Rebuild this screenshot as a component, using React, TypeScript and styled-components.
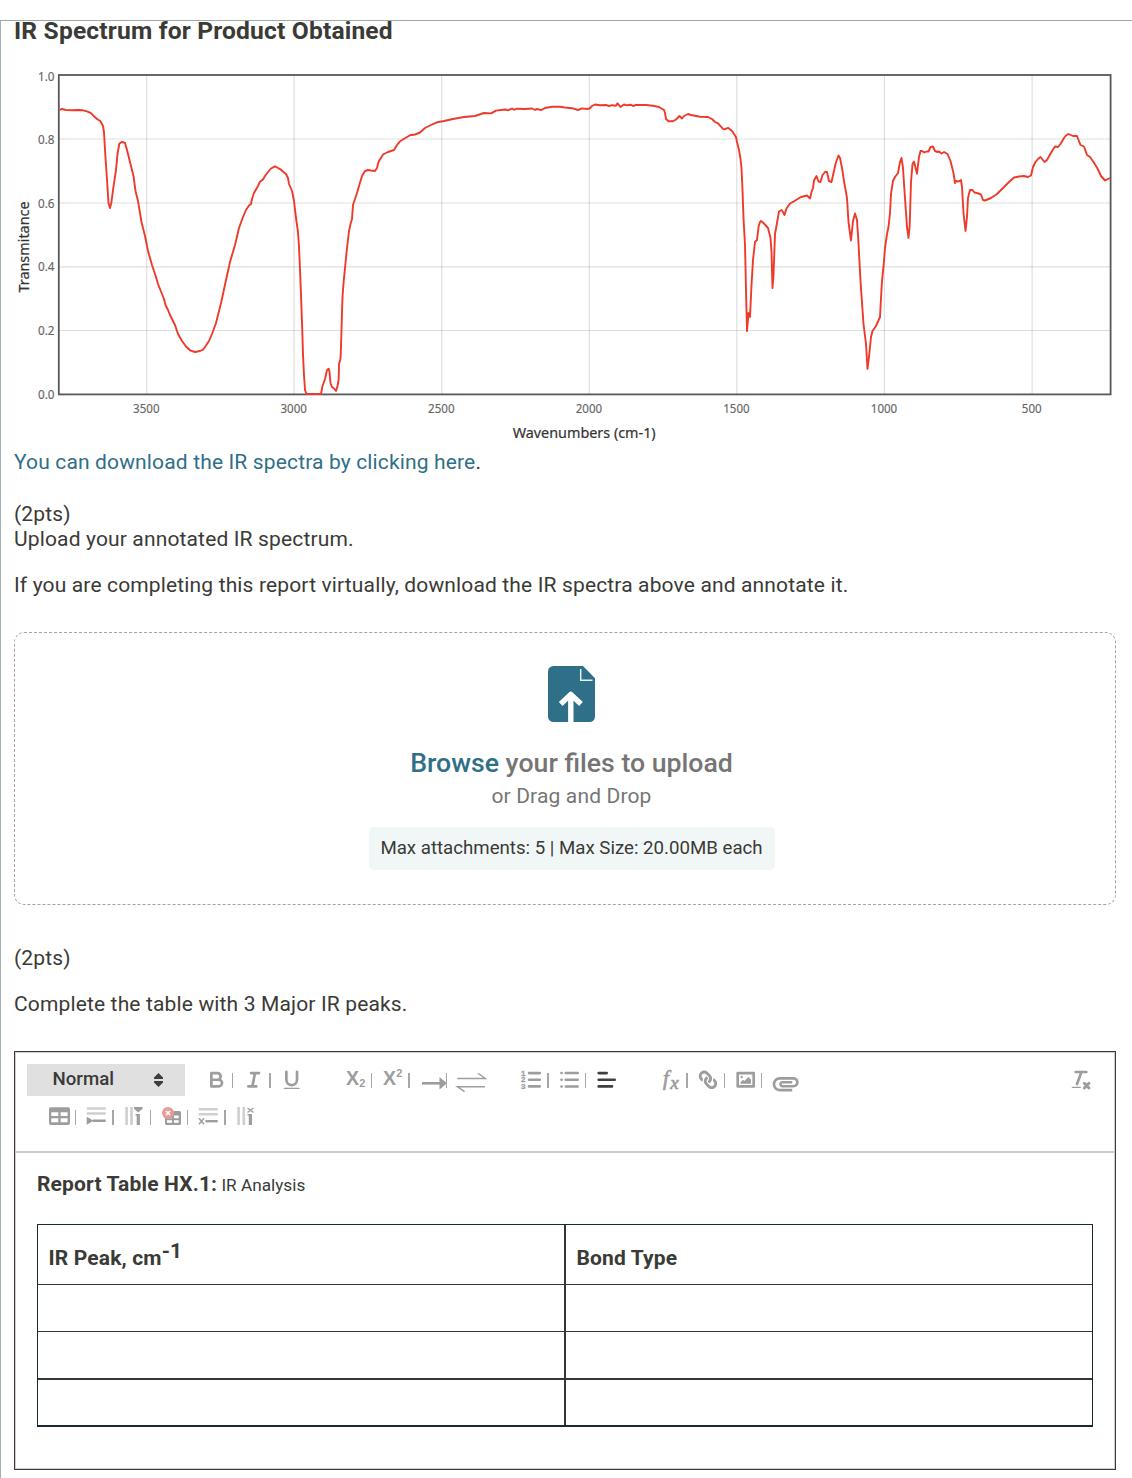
import React from "react";
import styled, { createGlobalStyle } from "styled-components";
import { FaLink } from "react-icons/fa";

const GlobalStyle = createGlobalStyle`
  * { box-sizing: border-box; }
  body {
    margin: 0;
    background: #fff;
    color: #3a3a36;
    font-family: Roboto, "Liberation Sans", sans-serif;
  }
`;

const Page = styled.div`
  height: 1478px;
  padding-top: 20px;
  overflow: hidden;
`;

const Section = styled.main`
  height: 1458px;
  padding: 0 16px 0 13px;
  border-top: 1px solid #a0a8a4;
  border-left: 1px solid #a5b3b6;
`;

const Title = styled.h2`
  margin: 0;
  height: 39px;
  font-size: 24.6px;
  letter-spacing: 0.17px;
  line-height: 20px;
  font-weight: 700;
  white-space: nowrap;
`;

const Chart = styled.svg`
  display: block;
  width: 1104px;
  height: 390px;
  font-family: "Noto Sans", sans-serif;
`;

const Line = styled.p<{ $gap?: number }>`
  margin: ${(p) => p.$gap ?? 0}px 0 0;
  font-size: 21px;
  letter-spacing: 0.145px;
  line-height: 25px;
  white-space: nowrap;
`;

const Link = styled.a`
  color: #2f6f88;
`;

const DropZone = styled.section`
  display: flex;
  flex-direction: column;
  align-items: center;
  width: 1102px;
  height: 273px;
  margin-top: 34px;
  padding: 33px 0 0 13px;
  border: 1px dashed #a3a3a3;
  border-radius: 10px;
`;

const Browse = styled.div`
  margin-top: 25px;
  font-size: 26.66px;
  line-height: 32px;
  font-weight: 500;
  color: #757575;
  white-space: nowrap;
  b { font-weight: 500; color: #2f6f88; }
`;

const DragHint = styled.div`
  margin-top: 4px;
  font-size: 21px;
  letter-spacing: 0.145px;
  line-height: 26px;
  color: #757575;
`;

const Limits = styled.div`
  margin-top: 18px;
  width: 406px;
  height: 43px;
  border-radius: 5px;
  background: #f1f7f7;
  text-align: center;
  font-size: 18.66px;
  line-height: 42px;
  white-space: nowrap;
`;

const Editor = styled.section`
  width: 1102px;
  height: 419px;
  margin-top: 34px;
  border: 1px solid #3a3a3a;
  box-shadow: inset 0 0 0 1px #cfcfcf;
`;

const Toolbar = styled.div`
  height: 101px;
  padding: 12px 22px 0 12px;
  border-bottom: 2px solid #ccc;
`;

const ToolRow = styled.div<{ $indent?: number }>`
  display: flex;
  gap: 27px;
  align-items: flex-start;
  padding-left: ${(p) => p.$indent ?? 0}px;
`;

const Picker = styled.div`
  display: flex;
  align-items: center;
  justify-content: space-between;
  width: 158px;
  height: 32px;
  margin-right: -9px;
  padding: 0 22.5px 3px 25.5px;
  background: #e0e0e0;
  font-size: 18.66px;
  font-weight: 500;
  svg { position: relative; top: 1px; }
`;

const Tools = styled.div`
  display: flex;
`;

const Tool = styled.span<{ $top: number }>`
  display: flex;
  width: 37.33px;
  height: 34px;
  padding-top: ${(p) => p.$top}px;
  svg { flex: none; display: block; overflow: visible; }
`;

const Divider = styled.i`
  width: 1.3px;
  height: 15px;
  margin: 5px 0 0 1px;
  background: #a6a6a6;
`;

const CleanTool = styled.span`
  margin-left: auto;
  padding-top: 3.5px;
  svg { display: block; overflow: visible; }
`;

const EditorBody = styled.div`
  padding: 17px 22px 0;
`;

const Caption = styled.p`
  margin: 0;
  height: 54px;
  font-size: 17.2px;
  line-height: 28px;
  white-space: nowrap;
  b { font-size: 21px; letter-spacing: 0.15px; }
`;

const Table = styled.div`
  width: 1056px;
  border: 1px solid #172b2f;
  border-bottom-width: 2px;
`;

const Row = styled.div<{ $height: number; $line?: number }>`
  display: grid;
  grid-template-columns: 528px 1fr;
  height: ${(p) => p.$height}px;
  border-bottom: ${(p) => p.$line ?? 0}px solid #363632;
`;

const Cell = styled.div<{ $first?: boolean }>`
  padding: 18px 0 0 10.5px;
  border-right: ${(p) => (p.$first ? "2px solid #363632" : "0")};
  font-size: 21px;
  letter-spacing: 0.15px;
  line-height: 30px;
  font-weight: 700;
  sup { font-size: 21px; line-height: 0; vertical-align: 7px; }
`;

const GREY = "#9d9d9d";
const LIGHT = "#cfcfcf";

const CURVE =
  "60,109.8 62,109 66,110 72,110.2 78,110 83,110.3 87,111.3 91,113.2 94,116.3 97,119 100.5,121.3 103,126 104,132 105,150 107,180 108.5,203 110,208 111.3,203 113,190 116,170 117.5,154 119.3,143.8 122,141.8 125,143 127,150 130,162 133.5,176 135.5,191 138,201 140,213 141.5,222 145,236 148,251 152,265 156,277 158,284 160,289 162,294 164,299 165.500,305 168,310 170,315 172,319 175,325 178,334 182,341 186,346.5 190,350.3 195,352 200,351 203,349.7 206,345.5 209,341 212,334 216,323 218,315 221,303 223,294 226,280 230,262 235,245 239,228 243,217 246,210 249,205.5 251,204 252,199 254,193 258,186 260,181.7 263,179.5 265,176 268,172 271,168.5 275,166.3 278,168 281,169.7 284,172.5 286,174 288,178 289,184 292,191 294,201 296,218 298,232 299,247 300,269 301,295 302.3,331 303,355 304,375 305,390 306.5,394 321,394 322.5,386 325,379 327,370 328.7,368.7 329.5,372 330.5,383 332,387 334,388.5 336,391 337.5,386 338.7,379 339,364 340.5,359 341,347 342,313 342.5,297 343.7,281 346,258 347,248 349,231 350.5,224 352,219 353,205 355,199 357,193 359,186 362,176 365,171 368,170 371,170.5 375,171 377,168 378.5,162 383,154.5 388,152 394,150 397,145 400,141.3 405,138.3 410,135.3 415,134.5 420,132.5 425,128 431,125 437,122.3 444,121 453,119 464,117 475,116 484,113 491,113.4 496,110.6 505,109.5 508,110.3 512,108.5 514,109.8 517,108.7 525,109 532,108.5 535,109.8 537,109 541,110.2 545,108 552,106.8 560,106.7 565,107.5 572,108.2 578,110 582,108.4 587,109 589.5,108.5 592,106 595,104.5 600,105.3 606,105 609,106 612,105.2 616,105.7 617.5,103.3 620.5,107 624,104.5 627,105.3 631,104.7 633,106 636,105 641,105 646,105 653,105.8 659,107 664,110 665,113 666,119 668.5,121.2 673,121.3 676,119.5 679.5,116 682,118.5 684,116 688,114 691,115 695,115.7 700,116.8 708,117 712,119 715,122 718,123.3 723,128.8 724.5,129.3 728,127.8 732,131 736,137 737,142 739,150 740.5,159 741.5,168 742.5,190 743.5,218 745,245 746,290 747,331 748.5,313 750,317 751.5,285 753,260 755,242 757,240 758.7,226 760,222 761,221 764,223.5 768,228 770.5,238 771.5,252 772.5,288 773.5,275 775,234 777.5,220 779,211.5 781.5,210 783,212 784.5,215 786.5,208.5 790,203.5 794,201.3 801,197 807,195.5 810,198.5 811.5,192 813,188 814,180.5 816.5,176 818.5,181.5 820.5,182 822.5,175 825,172 827,172 829,181 831.5,182 833.5,173 835.5,164 838.5,155.5 840,158 842,168 844,181 847,198 848.5,222 851,240.5 853,221 855,213.5 857,220 858.3,240 860.5,281 863.5,324 866,344 867.5,369 869,357 871,337 872.5,331 876,326 880,317 881,298 882,281 884,261 885,248 887,234 888.5,227 890,213 891,194 893,181 895,177 898,173 900,162 901.5,158 903,168 904.7,194 907,227 908.5,238 909.7,225 911,182 912.5,164 914,161.5 917,173.7 919,157 920.5,151 922,151 924.5,152.5 926.5,151.5 928.5,151.5 930.5,147 933,146.5 935,151 937.5,152 939,151.5 941.5,153.5 944,152 947.5,154 950.5,161 953.5,173 955,183 956,181 958.5,181.5 961,180 962,187 963.5,213 965.5,231 967,217 968,198 970,190 972.5,190 974.5,192.5 977,193 981,194.5 983,200 985,200.5 991,198 997,194 1003,188 1009,182 1014,177.5 1019,176.5 1024,176 1028,177 1031,175.5 1033,167 1035.5,162 1038,159 1040.5,157 1044.5,162 1047,160 1050,154.5 1053,149.5 1055,146.5 1058,147 1060.5,144 1064,138 1066,135.5 1068.5,134 1073,136 1077,136 1080.5,145 1084,146.5 1087,155 1090,157 1093.5,162 1097.5,168.5 1101,176 1105,180.5 1108,179 1110,178";

const TICKS_X: [number, string][] = [
  [146.3, "3500"], [293.7, "3000"], [441.3, "2500"], [588.9, "2000"],
  [736.4, "1500"], [884, "1000"], [1031.7, "500"],
];
const TICKS_Y: [number, string][] = [
  [75, "1.0"], [139, "0.8"], [203, "0.6"], [266.8, "0.4"], [330.5, "0.2"], [394.5, "0.0"],
];

const Spectrum = () => (
  <Chart viewBox="14 60 1104 390">
    <g stroke="#000" strokeOpacity="0.13" strokeWidth="1.2">
      {TICKS_X.map(([x, t]) => <path key={t} d={`M${x + 0.4} 75V394`} />)}
      {TICKS_Y.slice(1, 5).map(([y, t]) => <path key={t} d={`M59 ${y}H1110`} />)}
    </g>
    <rect x="58.8" y="75" width="1051.8" height="319.4" fill="none" stroke="#58585a" strokeWidth="1.8" />
    <polyline points={CURVE} fill="none" stroke="#ee3a2b" strokeWidth="1.9" strokeLinejoin="round" />
    <g fill="#666" stroke="#666" strokeWidth=".15" fontSize="12">
      {TICKS_X.map(([x, t]) => (
        <text key={t} x={x} y="413" textAnchor="middle" textLength={t.length * 6.6} lengthAdjust="spacingAndGlyphs">{t}</text>
      ))}
      {TICKS_Y.map(([y, t]) => (
        <text key={t} x="54.500" y={y + (t === "1.0" ? 6 : 4.500)} textAnchor="end" textLength="16.500" lengthAdjust="spacingAndGlyphs">{t}</text>
      ))}
    </g>
    <g fill="#333" stroke="#333" strokeWidth=".2" fontSize="14" textAnchor="middle">
      <text x="584.2" y="437.5" textLength="143" lengthAdjust="spacingAndGlyphs">Wavenumbers (cm-1)</text>
      <text transform="translate(28.600 247) rotate(-90)" textLength="91" lengthAdjust="spacingAndGlyphs">Transmitance</text>
    </g>
  </Chart>
);

const UploadIcon = () => (
  <svg width="47" height="56" viewBox="0 0 47 56">
    <path d="M5.5 0H35l12 12.3v38.2a5.5 5.5 0 0 1-5.5 5.5h-36A5.5 5.5 0 0 1 0 50.500v-45A5.500 5.500 0 0 1 5.500 0z" fill="#2f6f88" />
    <path d="M32.700 3v11.200H44.500" fill="none" stroke="#e6eff2" strokeWidth="1.500" />
    <path d="M22.800 56V29M12.700 38l10.100-9.600L33 38" fill="none" stroke="#fff" strokeWidth="5.400" strokeLinejoin="round" />
  </svg>
);

const Glyph = ({ children, color = GREY }: { children: React.ReactNode; color?: string }) => (
  <svg width="28" height="24" viewBox="-1.27 0.2 21 18" fill="none" stroke={color} strokeWidth="2" strokeLinecap="round" strokeLinejoin="round">
    {children}
  </svg>
);

const Plain = ({ children }: { children: React.ReactNode }) => (
  <svg width="28" height="24" viewBox="0 0 28 24" fill={GREY}>{children}</svg>
);

const TableGlyph = () => (
  <Plain>
    <path fillRule="evenodd" d="M5 2.300h17a2 2 0 0 1 2 2V18a2 2 0 0 1-2 2H5a2 2 0 0 1-2-2V4.300a2 2 0 0 1 2-2zM5.300 7.300v3.700h7V7.300zM14.600 7.300v3.700h7V7.300zM5.300 13.300v3.900h7v-3.900zM14.600 13.300v3.900h7v-3.900z" />
  </Plain>
);

const groups: [React.ReactNode, boolean][][] = [
  [
    [<Glyph><path d="M5 4h4.500a2.500 2.500 0 0 1 0 5H5zM5 9h5.500a2.500 2.500 0 0 1 0 5H5z" /></Glyph>, true],
    [<Glyph><path d="M7 4h6M5 14h6M8 14l2-10" /></Glyph>, true],
    [<Glyph><path d="M5 3v6a4 4 0 0 0 8 0V3" /><rect x="3" y="15" width="12" height="1" rx=".5" fill={GREY} stroke="none" /></Glyph>, false],
  ],
  [
    [<Plain><g fontFamily="Liberation Sans, sans-serif" fontWeight="700"><text x="4" y="17" fontSize="19.500">X</text><text x="17.200" y="19" fontSize="11">2</text></g></Plain>, true],
    [<Plain><g fontFamily="Liberation Sans, sans-serif" fontWeight="700"><text x="4" y="17" fontSize="19.500">X</text><text x="17.200" y="9" fontSize="11">2</text></g></Plain>, true],
    [<Plain><path d="M5 14h18v2.600H5z" /><path d="M22.500 9l7.500 6.300-7.500 6.300z" /></Plain>, true],
    [<Plain><path d="M3.300 10.500h28l-7.300-5.200M31 18.700h-27.700l7.300 5" fill="none" stroke={GREY} strokeWidth="1.400" /></Plain>, false],
  ],
  [
    [<Glyph><path d="M7 4h8M7 9h8M7 14h8" /><g fill={GREY} stroke={GREY} strokeWidth=".2" fontSize="6" fontWeight="700" fontFamily="Liberation Sans, sans-serif"><text x="1" y="6">1</text><text x="1" y="11">2</text><text x="1" y="16">3</text></g></Glyph>, true],
    [<Glyph><path d="M6 4h9M6 9h9M6 14h9M2.800 4h.2M2.800 9h.2M2.800 14h.2" strokeWidth="1.900" /></Glyph>, true],
    [<Glyph color="#404040"><path d="M3 9h12M3 14h10M3 4h6" /></Glyph>, false],
  ],
  [
    [<Plain><g fontFamily="Liberation Serif, serif" fontStyle="italic" stroke={GREY} strokeWidth=".7"><text x="6" y="16.700" fontSize="21">f</text><text x="13.300" y="20.600" fontSize="19">x</text></g></Plain>, true],
    [<Plain><g transform="translate(22.200 0) scale(-1 1)"><FaLink x="0" y="2.600" size={18.5} color={GREY} /></g></Plain>, true],
    [<Glyph><rect x="3" y="4" width="12" height="10" strokeLinejoin="round" /><circle cx="6" cy="7" r=".9" fill={GREY} stroke="none" /><path d="M5 12v-1l2-2 1 1 3-3 2 2v3z" fill={GREY} stroke="none" /></Glyph>, true],
    [<Plain><path transform="translate(1.100 0) scale(1.300)" d="M2 12.500C2 9.460 4.460 7 7.500 7H18c2.210 0 4 1.790 4 4s-1.790 4-4 4H9.500C8.120 15 7 13.880 7 12.500S8.120 10 9.500 10H17v2H9.410c-.55 0-.55 1 0 1H18c1.100 0 2-.9 2-2s-.9-2-2-2H7.500C5.570 9 4 10.570 4 12.500S5.570 16 7.500 16H17v2H7.500C4.460 18 2 15.540 2 12.500z" /></Plain>, false],
  ],
];

const tableTools: React.ReactNode[] = [
  <TableGlyph />,
  <Plain><path d="M3.700 2.300h19v2.500h-19zM3.700 7.300h19v2.500h-19z" fill={LIGHT} /><path d="M3.700 11.700l7 4-7 4zM10 14.500h12.700v2.500H10z" /></Plain>,
  <Plain><path d="M4.300 2h2.600v18H4.300zM9.200 2h2.600v18H9.200z" fill={LIGHT} /><path d="M13 2h8.500v1.800L17.200 7.500 13 3.800zM15.700 9h3.200v11h-3.200zM14.500 9h3v1.500h-3z" /></Plain>,
  <Plain>
    <path fillRule="evenodd" d="M9 6h12.500a1.500 1.500 0 0 1 1.500 1.500v11a1.500 1.500 0 0 1-1.500 1.500H8.500A1.500 1.500 0 0 1 7 18.500V7zM9 10.500v2.800h5v-2.800zM16 10.500v2.800h4.700v-2.800zM9 15.300v2.500h5v-2.500zM16 15.300v2.500h4.700v-2.500z" />
    <circle cx="10" cy="8" r="6" fill="#e49d97" /><path d="M8 6l4 4M12 6l-4 4" stroke="#fff" strokeWidth="1.600" />
  </Plain>,
  <Plain><path d="M3.700 3h19v2.500h-19zM3.700 8h19v2.500h-19z" fill={LIGHT} /><path d="M10.500 15h12.200v2.400H10.500z" /><path d="M4 13.200l5 6M9 13.200l-5 6" stroke={GREY} strokeWidth="1.400" /></Plain>,
  <Plain><path d="M4.300 2h2.600v18H4.300zM9.500 2h2.600v18H9.500z" fill={LIGHT} /><path d="M15.800 9H19v11h-3.200zM14.500 9h3v1.500h-3z" /><path d="M14.500 3l6 4.500M20.500 3l-6 4.500" stroke={GREY} strokeWidth="1.400" /></Plain>,
];

export default function App() {
  return (
    <Page>
      <GlobalStyle />
      <Section>
        <Title>IR Spectrum for Product Obtained</Title>
        <Spectrum />
        <Line><Link>You can download the IR spectra by clicking here</Link>.</Line>
        <Line $gap={27}>(2pts)</Line>
        <Line>Upload your annotated IR spectrum.</Line>
        <Line $gap={21}>If you are completing this report virtually, download the IR spectra above and annotate it.</Line>
        <DropZone>
          <UploadIcon />
          <Browse><b>Browse</b> your files to upload</Browse>
          <DragHint>or Drag and Drop</DragHint>
          <Limits>Max attachments: 5 | Max Size: 20.00MB each</Limits>
        </DropZone>
        <Line $gap={41}>(2pts)</Line>
        <Line $gap={21}>Complete the table with 3 Major IR peaks.</Line>
        <Editor>
          <Toolbar>
            <ToolRow>
              <Picker>
                Normal
                <svg width="9" height="14" viewBox="0 0 9 14" fill="#3d3d3d"><path d="M4.500 0L9 4.500V6H0V4.500zM4.500 14L9 9.500V8H0v1.500z" /></svg>
              </Picker>
              {groups.map((tools, g) => (
                <Tools key={g}>
                  {tools.map(([icon, divided], i) => (
                    <Tool key={i} $top={4}>{icon}{divided && <Divider />}</Tool>
                  ))}
                </Tools>
              ))}
              <CleanTool>
                <svg width="24" height="24" viewBox="0 0 18 18" fill="none" stroke={GREY} strokeWidth="2" strokeLinecap="round">
                  <path d="M5 3h8M6 12l3.350-9" />
                  <path d="M11.500 11.500l3.500 3.500M15 11.500l-3.500 3.500" strokeWidth="2.200" />
                  <rect x="2" y="14" width="7" height="1" rx=".5" fill={GREY} stroke="none" />
                </svg>
              </CleanTool>
            </ToolRow>
            <ToolRow $indent={19}>
              <Tools>
                {tableTools.map((icon, i) => (
                  <Tool key={i} $top={7}>{icon}{i < tableTools.length - 1 && <Divider />}</Tool>
                ))}
              </Tools>
            </ToolRow>
          </Toolbar>
          <EditorBody>
            <Caption><b>Report Table HX.1:</b> IR Analysis</Caption>
            <Table>
              <Row $height={60} $line={1}>
                <Cell $first>IR Peak, cm<sup>-1</sup></Cell>
                <Cell>Bond Type</Cell>
              </Row>
              <Row $height={47} $line={1}><Cell $first /><Cell /></Row>
              <Row $height={48} $line={2}><Cell $first /><Cell /></Row>
              <Row $height={45}><Cell $first /><Cell /></Row>
            </Table>
          </EditorBody>
        </Editor>
      </Section>
    </Page>
  );
}
